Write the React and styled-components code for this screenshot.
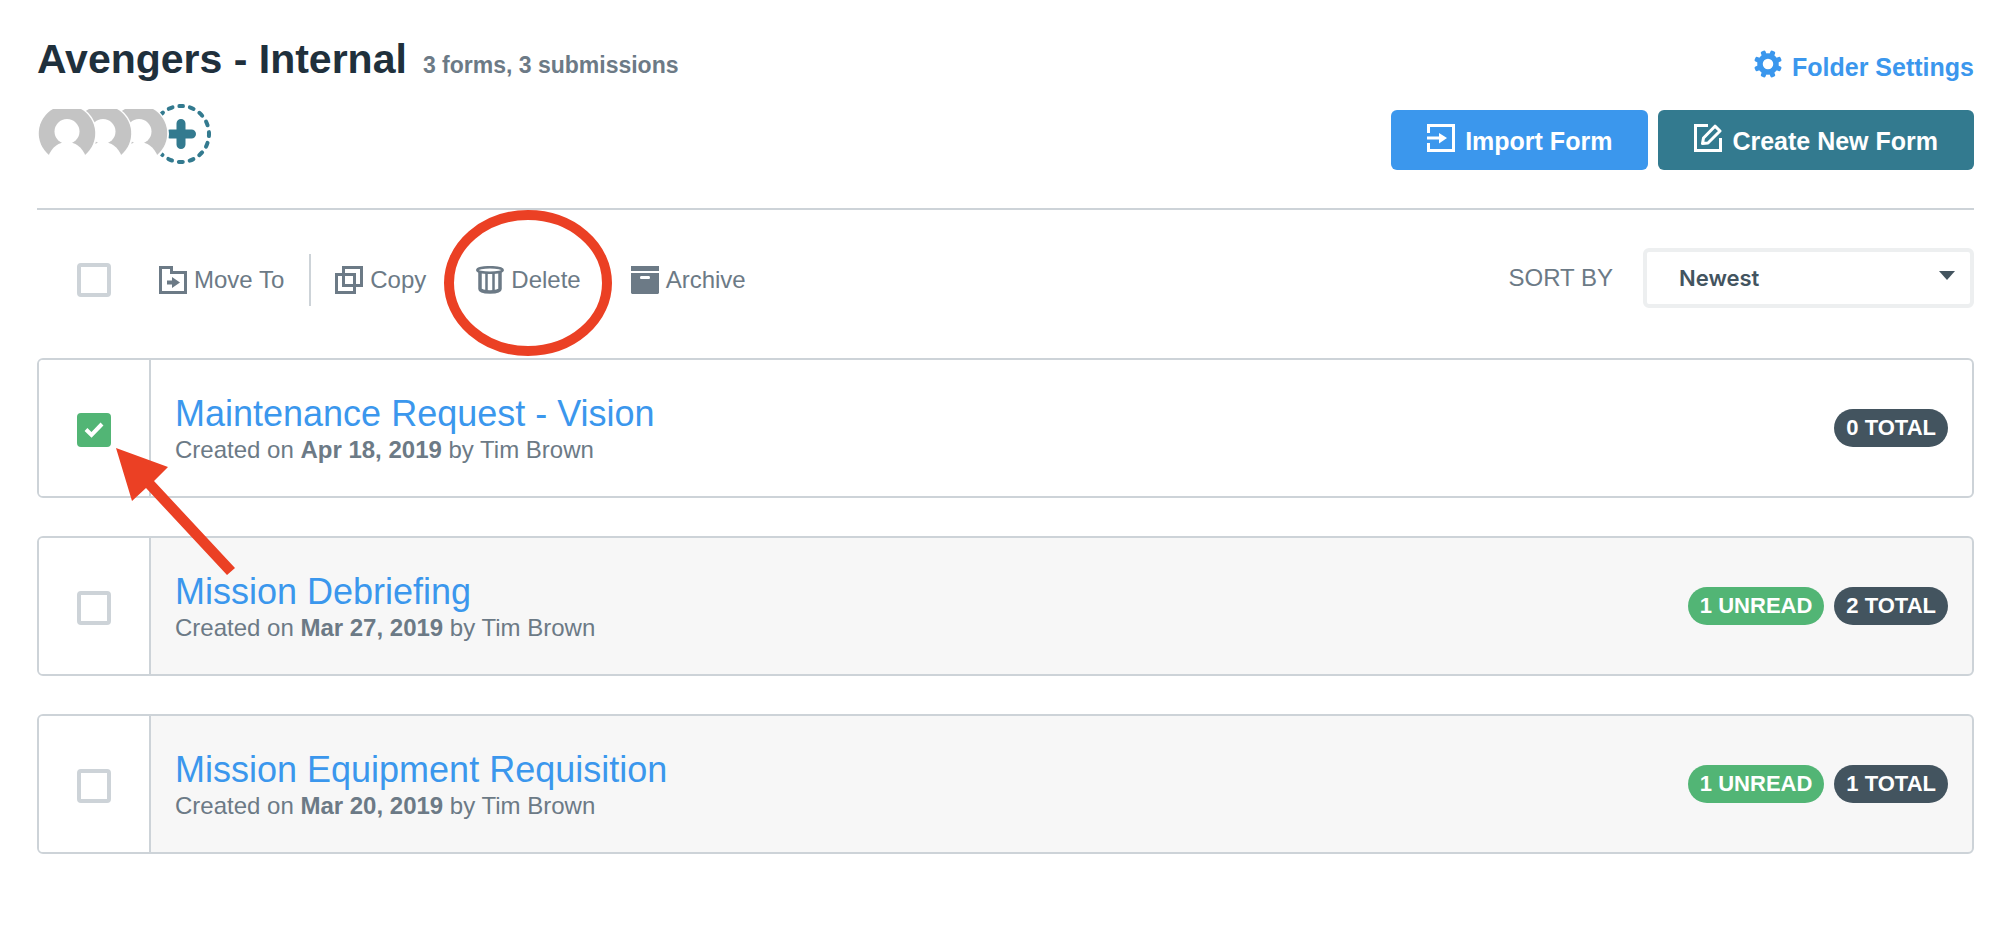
import { useState } from "react";
import styled, { createGlobalStyle } from "styled-components";

const GlobalStyle = createGlobalStyle`
  * {
    box-sizing: border-box;
  }
  body {
    margin: 0;
    background: #fff;
    color: #6c7a86;
    font-family: "Liberation Sans", Arial, sans-serif;
    font-size: 24px;
    line-height: 28px;
  }
  h1, h2, p, ul {
    margin: 0;
    padding: 0;
  }
  button, select {
    font-family: inherit;
    font-size: inherit;
    line-height: inherit;
  }
`;

const Page = styled.main`
  padding: 32px 20px 40px 37px;
`;

const Header = styled.header`
  display: flex;
  justify-content: space-between;
  padding-bottom: 38px;
  border-bottom: 2px solid #cdd3d8;
`;

const TitleRow = styled.div`
  display: flex;
  align-items: baseline;
  gap: 16px;
`;

const Title = styled.h1`
  color: #1f303c;
  font-size: 41px;
  line-height: 54px;
`;

const Summary = styled.p`
  font-size: 23px;
  font-weight: bold;
`;

const Members = styled.svg`
  display: block;
  width: 176px;
  height: 60px;
  margin-top: 18px;
`;

const Side = styled.div`
  display: flex;
  flex-direction: column;
  align-items: flex-end;
  gap: 26px;
  padding-top: 18px;
`;

const SettingsLink = styled.a`
  display: flex;
  align-items: flex-start;
  gap: 10px;
  color: #3b97ed;
  font-size: 25px;
  font-weight: bold;
  line-height: 34px;
  text-decoration: none;
`;

const Actions = styled.div`
  display: flex;
  gap: 10px;
`;

const ActionButton = styled.button`
  display: flex;
  gap: 10px;
  height: 60px;
  padding: 14px 36px;
  border: 0;
  border-radius: 6px;
  background: ${({ $color }) => $color};
  color: #fff;
  font-size: 25px;
  font-weight: bold;
  line-height: 34px;
`;

const Icon = styled.svg`
  flex: none;
  display: block;
  width: 28px;
  height: 28px;
`;

const Toolbar = styled.div`
  display: flex;
  align-items: center;
  padding: 38px 0 46px 40px;
`;

const Checkbox = styled.input`
  appearance: none;
  display: block;
  flex: none;
  width: 34px;
  height: 34px;
  margin: 0;
  border: 4px solid #cdd3d8;
  border-radius: 4px;
  background: #fff;

  &:checked {
    border-color: #52b575;
    background: #52b575
      url("data:image/svg+xml,%3Csvg xmlns='http://www.w3.org/2000/svg' viewBox='0 0 26 26'%3E%3Cpath d='M5 12.500L10.500 18L21 7' fill='none' stroke='white' stroke-width='4'/%3E%3C/svg%3E")
      center / 26px no-repeat;
  }
`;

const Tools = styled.div`
  display: flex;
  align-items: center;
  margin-left: 48px;
`;

const ToolGroup = styled.div`
  display: flex;
  gap: 50px;

  & + & {
    margin-left: 25px;
    padding-left: 24px;
    border-left: 2px solid #cdd3d8;
  }
`;

const ToolButton = styled.button`
  position: relative;
  display: flex;
  align-items: center;
  gap: 7px;
  padding: 12px 0;
  border: 0;
  background: none;
  color: #6c7a86;
`;

const Highlight = styled.svg`
  position: absolute;
  left: -32px;
  top: -44px;
  width: 168px;
  height: 146px;
  pointer-events: none;
`;

const Sort = styled.div`
  display: flex;
  align-items: center;
  gap: 30px;
  margin-left: auto;
  margin-bottom: 4px;
`;

const SelectBox = styled.div`
  position: relative;
`;

const SortSelect = styled.select`
  appearance: none;
  width: 331px;
  height: 60px;
  padding: 0 32px;
  border: 4px solid #edeff0;
  border-radius: 6px;
  background: #fff;
  color: #43545f;
  font-family: Inter, sans-serif;
  font-size: 22px;
  font-weight: 600;
`;

const Caret = styled.svg`
  position: absolute;
  right: 19px;
  top: 23px;
  width: 16px;
  height: 9px;
  pointer-events: none;
`;

const FormList = styled.ul`
  display: grid;
  gap: 38px;
  list-style: none;
`;

const FormCard = styled.li`
  display: flex;
  min-height: 140px;
  border: 2px solid #cdd3d8;
  border-radius: 6px;
  background: ${({ $selected }) => ($selected ? "#fff" : "#f7f7f7")};
`;

const SelectCell = styled.div`
  position: relative;
  display: flex;
  align-items: center;
  padding: 4px 38px 0;
  border-right: 2px solid #cdd3d8;
  border-radius: 4px 0 0 4px;
  background: #fff;
`;

const Arrow = styled.svg`
  position: absolute;
  left: 77px;
  top: 88px;
  width: 120px;
  height: 128px;
  pointer-events: none;
`;

const FormInfo = styled.div`
  flex: 1;
  padding: 32px 24px;
`;

const FormTitle = styled.h2`
  font-size: 36px;
  font-weight: normal;
  line-height: 44px;

  a {
    color: #3b97ed;
    text-decoration: none;
  }
`;

const Badges = styled.div`
  display: flex;
  align-items: center;
  gap: 10px;
  padding-right: 24px;
`;

const Badge = styled.span`
  padding: 5px 12px;
  border-radius: 19px;
  background: ${({ $unread }) => ($unread ? "#52b575" : "#43545f")};
  color: #fff;
  font-size: 22px;
  font-weight: bold;
`;

const forms = [
  { id: 1, title: "Maintenance Request - Vision", date: "Apr 18, 2019", unread: 0, total: 0 },
  { id: 2, title: "Mission Debriefing", date: "Mar 27, 2019", unread: 1, total: 2 },
  { id: 3, title: "Mission Equipment Requisition", date: "Mar 20, 2019", unread: 1, total: 1 },
];

const teeth = [22.5, 67.5, 112.5, 157.5, 202.5, 247.5, 292.5, 337.5];

const GearIcon = () => (
  <Icon viewBox="0 0 28 28" aria-hidden="true">
    <circle cx="14" cy="14" r="8" fill="none" stroke="currentColor" strokeWidth="5.5" />
    {teeth.map((deg) => (
      <rect
        key={deg}
        x="11.5"
        y="0"
        width="5"
        height="6"
        rx="1.5"
        fill="currentColor"
        transform={`rotate(${deg} 14 14)`}
      />
    ))}
  </Icon>
);

const ImportIcon = () => (
  <Icon viewBox="0 0 28 28" aria-hidden="true">
    <path d="M1.5 9V1.5H26.5V26.5H1.5V19" fill="none" stroke="currentColor" strokeWidth="3" />
    <path d="M0 12.500H12V9L20 14L12 19.500V15.500H0Z" fill="currentColor" />
  </Icon>
);

const EditIcon = () => (
  <Icon viewBox="0 0 28 28" fill="none" stroke="currentColor" strokeWidth="3" aria-hidden="true">
    <path d="M14 1.5H1.5V26.5H26.5V14" />
    <path d="M8.5 19.5L9.500 14L21 2.200L26 7L14 19L8.500 19.500Z" strokeLinejoin="round" />
  </Icon>
);

const MoveIcon = () => (
  <Icon viewBox="0 0 28 28" aria-hidden="true">
    <path d="M1.5 1.5H12.5V6.5H26.5V26.5H1.5Z" fill="none" stroke="currentColor" strokeWidth="3" />
    <path d="M8 14.5H13V11L21 16.500L13 22V18.500H8Z" fill="currentColor" />
  </Icon>
);

const CopyIcon = () => (
  <Icon viewBox="0 0 28 28" fill="none" stroke="currentColor" strokeWidth="3" aria-hidden="true">
    <rect x="8.5" y="1.5" width="18" height="18" />
    <rect x="1.5" y="8.5" width="18" height="18" />
  </Icon>
);

const TrashIcon = () => (
  <Icon viewBox="0 0 28 28" fill="none" stroke="currentColor" strokeWidth="2.5" aria-hidden="true">
    <ellipse cx="14" cy="4" rx="12.700" ry="2.800" />
    <path d="M4 6V23C4 27 24 27 24 23V6" strokeWidth="3.5" />
    <path d="M10.500 7V25M17.500 7V25" />
  </Icon>
);

const ArchiveIcon = () => (
  <Icon viewBox="0 0 28 28" fill="currentColor" aria-hidden="true">
    <path d="M0 0H28V5H0Z" />
    <path
      d="M0 7H28V27L27 28H1L0 27ZM10 10Q9 10 9 11.5Q9 13 10 13H18Q19 13 19 11.5Q19 10 18 10Z"
      fillRule="evenodd"
    />
  </Icon>
);

const Avatar = ({ cx }) => (
  <g>
    <circle cx={cx} cy="30" r="30" fill="#fff" />
    <path d={`M${cx - 18} 51A28 28 0 0 1 ${cx - 14} 5H${cx + 14}A28 28 0 0 1 ${cx + 18} 51Z`} fill="#c4c4c4" />
    <circle cx={cx} cy="27.5" r="12.5" fill="#fff" />
    <path d={`M${cx - 19} 53C${cx - 12} 33 ${cx + 12} 33 ${cx + 19} 53Z`} fill="#fff" />
  </g>
);

const MemberList = () => (
  <Members viewBox="0 0 176 60" role="img" aria-label="3 members">
    <circle
      cx="144"
      cy="30"
      r="28"
      fill="none"
      stroke="#337a8f"
      strokeWidth="4"
      strokeLinecap="round"
      strokeDasharray="4 7"
      strokeDashoffset="2"
      transform="rotate(-90 144 30)"
    />
    <path d="M144 19.5V40.5M133 30H154.5" stroke="#337a8f" strokeWidth="9" strokeLinecap="round" />
    <Avatar cx={102} />
    <Avatar cx={66} />
    <Avatar cx={30} />
  </Members>
);

export default function App() {
  const [selected, setSelected] = useState([1]);

  const toggle = (id) => {
    setSelected((prev) => (prev.includes(id) ? prev.filter((item) => item !== id) : [...prev, id]));
  };

  const toggleAll = () => {
    setSelected(selected.length === forms.length ? [] : forms.map((form) => form.id));
  };

  return (
    <>
      <GlobalStyle />
      <Page>
        <Header>
          <div>
            <TitleRow>
              <Title>Avengers - Internal</Title>
              <Summary>3 forms, 3 submissions</Summary>
            </TitleRow>
            <MemberList />
          </div>
          <Side>
            <SettingsLink href="#settings">
              <GearIcon />
              Folder Settings
            </SettingsLink>
            <Actions>
              <ActionButton type="button" $color="#3b97ed">
                <ImportIcon />
                Import Form
              </ActionButton>
              <ActionButton type="button" $color="#337a8f">
                <EditIcon />
                Create New Form
              </ActionButton>
            </Actions>
          </Side>
        </Header>

        <Toolbar>
          <Checkbox
            type="checkbox"
            aria-label="Select all forms"
            checked={selected.length === forms.length}
            onChange={toggleAll}
          />
          <Tools>
            <ToolGroup>
              <ToolButton type="button">
                <MoveIcon />
                Move To
              </ToolButton>
            </ToolGroup>
            <ToolGroup>
              <ToolButton type="button">
                <CopyIcon />
                Copy
              </ToolButton>
              <ToolButton type="button">
                <TrashIcon />
                Delete
                <Highlight viewBox="0 0 168 146" aria-hidden="true">
                  <ellipse cx="84" cy="73" rx="79" ry="68" fill="none" stroke="#eb4024" strokeWidth="10" />
                </Highlight>
              </ToolButton>
              <ToolButton type="button">
                <ArchiveIcon />
                Archive
              </ToolButton>
            </ToolGroup>
          </Tools>
          <Sort>
            <label htmlFor="sort">SORT BY</label>
            <SelectBox>
              <SortSelect id="sort">
                <option>Newest</option>
              </SortSelect>
              <Caret viewBox="0 0 16 9" aria-hidden="true">
                <path d="M0 0H16L8 9Z" fill="#43545f" />
              </Caret>
            </SelectBox>
          </Sort>
        </Toolbar>

        <FormList>
          {forms.map((form) => (
            <FormCard key={form.id} $selected={selected.includes(form.id)}>
              <SelectCell>
                <Checkbox
                  type="checkbox"
                  aria-label={form.title}
                  checked={selected.includes(form.id)}
                  onChange={() => toggle(form.id)}
                />
                {form.id === 1 && (
                  <Arrow viewBox="0 0 120 128" aria-hidden="true">
                    <path d="M0 0L52 19L38 33L119 120L111 127L30 40L16 53Z" fill="#eb4024" />
                  </Arrow>
                )}
              </SelectCell>
              <FormInfo>
                <FormTitle>
                  <a href={`#form-${form.id}`}>{form.title}</a>
                </FormTitle>
                <p>
                  Created on <b>{form.date}</b> by Tim Brown
                </p>
              </FormInfo>
              <Badges>
                {form.unread > 0 && <Badge $unread>{form.unread} UNREAD</Badge>}
                <Badge>{form.total} TOTAL</Badge>
              </Badges>
            </FormCard>
          ))}
        </FormList>
      </Page>
    </>
  );
}
